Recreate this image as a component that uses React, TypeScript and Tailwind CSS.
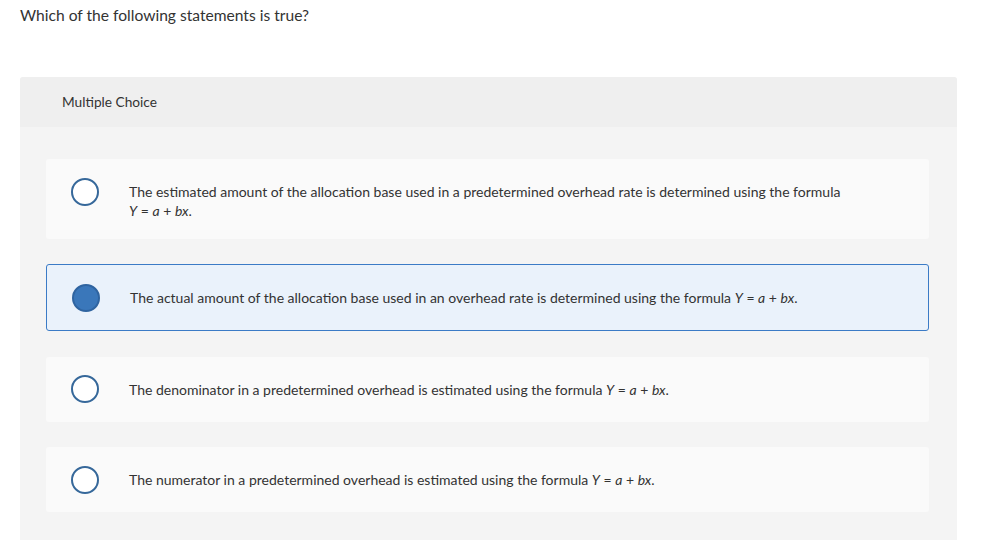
import React from "react";

const F = () => (
  <span className="italic whitespace-nowrap">
    Y<span className="not-italic"> = </span>a<span className="not-italic"> + </span>bx
  </span>
);

type Opt = { text: React.ReactNode; selected?: boolean };

const options: Opt[] = [
  {
    text: (
      <>
        The estimated amount of the allocation base used in a predetermined overhead rate is determined using the formula{" "}
        <F />.
      </>
    ),
  },
  {
    text: (
      <>
        The actual amount of the allocation base used in an overhead rate is determined using the formula <F />.
      </>
    ),
    selected: true,
  },
  {
    text: (
      <>
        The denominator in a predetermined overhead is estimated using the formula <F />.
      </>
    ),
  },
  {
    text: (
      <>
        The numerator in a predetermined overhead is estimated using the formula <F />.
      </>
    ),
  },
];

export default function App() {
  return (
    <div
      className="w-[992px] h-[556px] bg-white text-[#333333]"
      style={{ fontFamily: "Lato, 'Open Sans', sans-serif" }}
    >
      <div className="px-[20px] pt-[5px] text-[15.6px] leading-[20px]">Which of the following statements is true?</div>
      <div className="ml-[20px] mt-[52px] w-[937px] rounded-t-[3px] bg-[#f4f4f4]">
        <div className="h-[50px] rounded-t-[3px] bg-[#efefef] pl-[42px] pt-[15px] text-[13.7px] leading-[20px]">
          Multiple Choice
        </div>
        <div className="flex flex-col gap-[25.5px] pl-[26px] pr-[28px] pt-[32px] pb-[28px]">
          {options.map((o, i) => (
            <div
              key={i}
              className={
                "flex items-start rounded-[3px] pl-[25px] pr-[20px] py-[18.5px] " +
                (o.selected ? "border border-[#3b7bc6] bg-[#eaf2fb] py-[17.5px] pl-[24px]" : "bg-[#fafafa]")
              }
            >
              <div
                className={
                  "h-[28px] w-[28px] shrink-0 rounded-full border-2 " +
                  (o.selected ? "border-[#2f64a0] bg-[#3a77ba]" : "border-[#36689a] bg-white")
                }
              />
              <div className="ml-[30px] max-w-[740px] pt-[4.5px] text-[14px] leading-[19px]">{o.text}</div>
            </div>
          ))}
        </div>
      </div>
    </div>
  );
}
